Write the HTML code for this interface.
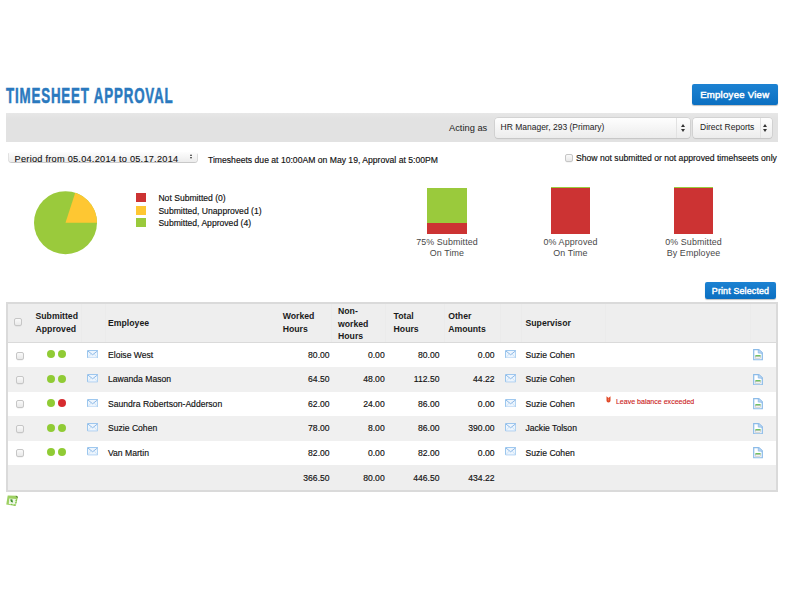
<!DOCTYPE html>
<html><head><meta charset="utf-8">
<style>
*{box-sizing:border-box;margin:0;padding:0}
html,body{width:788px;height:591px;overflow:hidden;background:#fff}
body{position:relative;font-family:"Liberation Sans",sans-serif;color:#222;font-size:8.6px}
.abs{position:absolute;white-space:nowrap}
.title{left:6.3px;top:83px;font-size:21.3px;line-height:26px;font-weight:bold;color:#2a79be;-webkit-text-stroke:0.55px #2a79be;letter-spacing:1.3px;transform:scaleX(0.627);transform-origin:0 0}
.btn{position:absolute;background:linear-gradient(#1c82d2,#0b6fc1);border-radius:2px;color:#fff;font-weight:bold;text-align:center;box-shadow:0 1px 1px rgba(0,0,0,.25)}
.bar{position:absolute;left:6px;top:112.5px;width:772px;height:29.5px;background:linear-gradient(#e7e7e7,#e2e2e2 20%,#e2e2e2)}
.sel{position:absolute;background:linear-gradient(#fefefe,#ececec);border-radius:3px;box-shadow:0 0 0 0.5px #c4c4c4,0 1px 1px rgba(0,0,0,.12)}
.arr{position:absolute;width:0;height:0;border-left:2.5px solid transparent;border-right:2.5px solid transparent}
.up{border-bottom:3px solid #333}
.dn{border-top:3px solid #333}
.sw{position:absolute;left:136px;width:10px;height:9px}
.lg{position:absolute;left:158.4px;font-size:8.6px;color:#111;-webkit-text-stroke:0.15px #111}
.cb{position:absolute;width:8px;height:8px;border:1px solid #c6c6c6;border-radius:2px;background:linear-gradient(#fafafa,#e9e9e9);box-shadow:0 0.5px 0.5px rgba(0,0,0,.08)}
.clab{position:absolute;text-align:center;color:#484848;font-size:8.9px;letter-spacing:0.12px;line-height:11px;width:120px}
.vbar{position:absolute;top:188px;width:40px;height:46px;background:#cc3333}
.th{position:absolute;font-weight:bold;font-size:8.7px;line-height:12.9px;color:#1a1a1a;white-space:nowrap}
.td{position:absolute;font-size:8.6px;line-height:13px;color:#111;-webkit-text-stroke:0.15px #111;white-space:nowrap}
.td.r{width:60px;text-align:right}
.dot{position:absolute;width:8px;height:8px;border-radius:50%;background:#90cb35}
.env,.doc{position:absolute}
</style></head><body>
<svg width="0" height="0" style="position:absolute">
<defs>
<symbol id="envsym" viewBox="0 0 23 18"><rect x="1" y="1" width="21" height="16" rx="1" fill="#edf5fd" stroke="#8dbdec" stroke-width="1.8"/><path d="M1.5 1.8 L11.5 10 L21.5 1.8" fill="none" stroke="#7fb0e4" stroke-width="1.8"/><path d="M2 16 L8.5 8 M21 16 L14.5 8" stroke="#b5d5f3" stroke-width="1.1"/></symbol>
<symbol id="docsym" viewBox="0 0 21 24"><path d="M1.5 1.5 H11.5 L19.5 9 V22.5 H1.5 Z" fill="#fff" stroke="#8bbbe8" stroke-width="2.6"/><path d="M11 1.5 Q11 8 11 8.5 Q14 8.5 19.5 9 L19.5 7 L13 1.5 Z" fill="#b5d3f2" stroke="#8bbbe8" stroke-width="1.6"/><rect x="5.5" y="15.3" width="10" height="4" fill="#f2f2f2" stroke="#a8a8a8" stroke-width="0.9"/><rect x="5" y="12.8" width="11" height="2.5" fill="#5cb84a"/></symbol>
</defs></svg>


<div class="abs title">TIMESHEET APPROVAL</div>
<div class="btn" style="left:691.5px;top:84px;width:86.5px;height:21px;font-size:9.6px;line-height:22px;font-weight:normal;-webkit-text-stroke:0.45px #fff;letter-spacing:0.25px"><span style="display:inline-block">Employee View</span></div>

<div class="bar"></div>
<div class="abs" style="left:449px;top:121.7px;font-size:9.3px;line-height:12px;color:#222">Acting as</div>
<div class="sel" style="left:494.5px;top:117.5px;width:195px;height:20px">
  <div class="abs" style="left:6px;top:3.3px;font-size:8.5px;line-height:12px;color:#222">HR Manager, 293 (Primary)</div>
  <div style="position:absolute;left:181.5px;top:0;width:1px;height:20px;background:#e2e2e2"></div>
  <div class="arr up" style="left:186px;top:6px"></div>
  <div class="arr dn" style="left:186px;top:11px"></div>
</div>
<div class="sel" style="left:693px;top:117.5px;width:79px;height:20px">
  <div class="abs" style="left:7px;top:3.3px;font-size:8.5px;line-height:12px;color:#222">Direct Reports</div>
  <div style="position:absolute;left:66.5px;top:0;width:1px;height:20px;background:#e2e2e2"></div>
  <div class="arr up" style="left:70px;top:6px"></div>
  <div class="arr dn" style="left:70px;top:11px"></div>
</div>

<div class="sel" style="left:8.5px;top:152px;width:188.5px;height:10.3px;border-radius:1px 2px 2.5px 2.5px;background:linear-gradient(#fdfdfd,#ececec);box-shadow:0.6px 0.8px 0 #c2c2c2,-0.6px 0.8px 0 #cfcfcf">
  <div class="arr up" style="left:181px;top:1.5px;border-left-width:1.5px;border-right-width:1.5px;border-bottom-width:2px"></div>
  <div class="arr dn" style="left:181px;top:5px;border-left-width:1.5px;border-right-width:1.5px;border-top-width:2px"></div>
</div>
<div class="abs" style="left:14.6px;top:153.2px;font-size:9.68px;line-height:12px;color:#111;letter-spacing:0.25px;font-size:9.2px;-webkit-text-stroke:0.1px #111">Period from 05.04.2014 to 05.17.2014</div>
<div class="abs" style="left:208px;top:153.7px;font-size:8.62px;line-height:12px;color:#111;-webkit-text-stroke:0.15px #111">Timesheets due at 10:00AM on May 19, Approval at 5:00PM</div>
<div class="cb" style="left:565px;top:153.5px"></div>
<div class="abs" style="left:576px;top:152px;font-size:8.63px;line-height:12px;color:#111;-webkit-text-stroke:0.15px #111">Show not submitted or not approved timehseets only</div>

<!-- pie -->
<svg class="abs" style="left:0;top:0" width="788" height="591">
  <circle cx="65.5" cy="222.7" r="31.5" fill="#9aca3c"/>
  <path d="M65.5 222.7 L97 222.7 A31.5 31.5 0 0 0 75.23 192.74 Z" fill="#fec732"/>
</svg>
<div class="sw" style="top:193px;background:#cc3333"></div>
<div class="sw" style="top:205.5px;background:#fec732"></div>
<div class="sw" style="top:218px;background:#9aca3c"></div>
<div class="lg" style="top:192px;line-height:12px">Not Submitted (0)</div>
<div class="lg" style="top:204.5px;line-height:12px">Submitted, Unapproved (1)</div>
<div class="lg" style="top:217px;line-height:12px">Submitted, Approved (4)</div>

<!-- bars -->
<div class="vbar" style="left:427px;background:linear-gradient(#9aca3c 0,#9aca3c 35px,#cc3333 35px)"></div>
<div class="vbar" style="left:551px;top:187px;width:39px;height:47px;border-top:1px solid #9aca3c"></div>
<div class="vbar" style="left:674px;top:187px;width:39px;height:47px;border-top:1px solid #9aca3c"></div>
<div class="clab" style="left:387px;top:237px">75% Submitted<br>On Time</div>
<div class="clab" style="left:510.5px;top:237px">0% Approved<br>On Time</div>
<div class="clab" style="left:633.5px;top:237px">0% Submitted<br>By Employee</div>

<div class="btn" style="left:705px;top:282px;width:71px;height:16.5px;font-size:8.9px;line-height:19px;font-weight:normal;-webkit-text-stroke:0.42px #fff;letter-spacing:0.15px"><span style="display:inline-block">Print Selected</span></div>

<!-- table -->
<div style="position:absolute;left:6px;top:302px;width:772px;height:189.5px;border:2px solid #dadada;background:#fff"></div>
<div style="position:absolute;left:8px;top:304px;width:768px;height:37.5px;background:#eeeeee"></div>
<div style="position:absolute;left:8px;top:341.5px;width:768px;height:1.5px;background:#dadada"></div>
<div style="position:absolute;left:81px;top:304px;width:1px;height:37.5px;background:#ebebeb"></div><div style="position:absolute;left:104.5px;top:304px;width:1px;height:37.5px;background:#ebebeb"></div><div style="position:absolute;left:330.5px;top:304px;width:1px;height:37.5px;background:#ebebeb"></div><div style="position:absolute;left:385px;top:304px;width:1px;height:37.5px;background:#ebebeb"></div><div style="position:absolute;left:443.5px;top:304px;width:1px;height:37.5px;background:#ebebeb"></div><div style="position:absolute;left:500px;top:304px;width:1px;height:37.5px;background:#ebebeb"></div><div style="position:absolute;left:520.5px;top:304px;width:1px;height:37.5px;background:#ebebeb"></div><div style="position:absolute;left:605px;top:304px;width:1px;height:37.5px;background:#ebebeb"></div><div style="position:absolute;left:749.5px;top:304px;width:1px;height:37.5px;background:#ebebeb"></div>
<div class="cb" style="left:13.5px;top:317.5px"></div>
<div class="th" style="left:35.5px;top:310.4px">Submitted<br>Approved</div>
<div class="th" style="left:108px;top:316.9px">Employee</div>
<div class="th" style="left:282.7px;top:310.4px">Worked<br>Hours</div>
<div class="th" style="left:338px;top:304.6px">Non-<br>worked<br>Hours</div>
<div class="th" style="left:393.6px;top:310.4px">Total<br>Hours</div>
<div class="th" style="left:448.2px;top:310.4px">Other<br>Amounts</div>
<div class="th" style="left:525.5px;top:316.9px">Supervisor</div>
<div class="cb" style="left:15.5px;top:351.50px"></div>
<div class="dot" style="left:47px;top:350.30px"></div>
<div class="dot" style="left:58px;top:350.30px;"></div>
<svg class="env" style="left:87px;top:349.60px" width="11.3" height="8.6" viewBox="0 0 23 18" preserveAspectRatio="none"><use href="#envsym"/></svg>
<div class="td" style="left:108px;top:349.00px">Eloise West</div>
<div class="td r" style="left:269.6px;top:349.00px">80.00</div>
<div class="td r" style="left:324.7px;top:349.00px">0.00</div>
<div class="td r" style="left:379.5px;top:349.00px">80.00</div>
<div class="td r" style="left:434.6px;top:349.00px">0.00</div>
<svg class="env" style="left:504.7px;top:349.60px" width="11.3" height="8.6" viewBox="0 0 23 18" preserveAspectRatio="none"><use href="#envsym"/></svg>
<div class="td" style="left:525.5px;top:349.00px">Suzie Cohen</div>
<svg class="doc" style="left:753.3px;top:349.40px" width="10" height="11.5" viewBox="0 0 21 24" preserveAspectRatio="none"><use href="#docsym"/></svg>
<div style="position:absolute;left:8px;top:367.47px;width:768px;height:24.47px;background:#f0f0f0"></div>
<div class="cb" style="left:15.5px;top:375.97px"></div>
<div class="dot" style="left:47px;top:374.77px"></div>
<div class="dot" style="left:58px;top:374.77px;"></div>
<svg class="env" style="left:87px;top:374.07px" width="11.3" height="8.6" viewBox="0 0 23 18" preserveAspectRatio="none"><use href="#envsym"/></svg>
<div class="td" style="left:108px;top:373.47px">Lawanda Mason</div>
<div class="td r" style="left:269.6px;top:373.47px">64.50</div>
<div class="td r" style="left:324.7px;top:373.47px">48.00</div>
<div class="td r" style="left:379.5px;top:373.47px">112.50</div>
<div class="td r" style="left:434.6px;top:373.47px">44.22</div>
<svg class="env" style="left:504.7px;top:374.07px" width="11.3" height="8.6" viewBox="0 0 23 18" preserveAspectRatio="none"><use href="#envsym"/></svg>
<div class="td" style="left:525.5px;top:373.47px">Suzie Cohen</div>
<svg class="doc" style="left:753.3px;top:373.87px" width="10" height="11.5" viewBox="0 0 21 24" preserveAspectRatio="none"><use href="#docsym"/></svg>
<div class="cb" style="left:15.5px;top:400.44px"></div>
<div class="dot" style="left:47px;top:399.24px"></div>
<div class="dot" style="left:58px;top:399.24px;background:#d62b2f"></div>
<svg class="env" style="left:87px;top:398.54px" width="11.3" height="8.6" viewBox="0 0 23 18" preserveAspectRatio="none"><use href="#envsym"/></svg>
<div class="td" style="left:108px;top:397.94px">Saundra Robertson-Adderson</div>
<div class="td r" style="left:269.6px;top:397.94px">62.00</div>
<div class="td r" style="left:324.7px;top:397.94px">24.00</div>
<div class="td r" style="left:379.5px;top:397.94px">86.00</div>
<div class="td r" style="left:434.6px;top:397.94px">0.00</div>
<svg class="env" style="left:504.7px;top:398.54px" width="11.3" height="8.6" viewBox="0 0 23 18" preserveAspectRatio="none"><use href="#envsym"/></svg>
<div class="td" style="left:525.5px;top:397.94px">Suzie Cohen</div>
<svg class="doc" style="left:753.3px;top:398.34px" width="10" height="11.5" viewBox="0 0 21 24" preserveAspectRatio="none"><use href="#docsym"/></svg>
<svg class="abs" style="left:606px;top:396.14px" width="5" height="7" viewBox="0 0 10 14"><path d="M1 0.5 L4 3 L5 4 L6 3 L9 0.5 L9 9.5 Q9 13 5 13 Q1 13 1 9.5 Z" fill="#e04a2a"/><path d="M4 5 L6 5 L6 9 L4 9 Z" fill="#f07a5a"/></svg>
<div class="abs" style="left:615.9px;top:396.54px;font-size:7.05px;line-height:10px;color:#cc2424;-webkit-text-stroke:0.12px #cc2424">Leave balance exceeded</div>
<div style="position:absolute;left:8px;top:416.41px;width:768px;height:24.47px;background:#f0f0f0"></div>
<div class="cb" style="left:15.5px;top:424.91px"></div>
<div class="dot" style="left:47px;top:423.71px"></div>
<div class="dot" style="left:58px;top:423.71px;"></div>
<svg class="env" style="left:87px;top:423.01px" width="11.3" height="8.6" viewBox="0 0 23 18" preserveAspectRatio="none"><use href="#envsym"/></svg>
<div class="td" style="left:108px;top:422.41px">Suzie Cohen</div>
<div class="td r" style="left:269.6px;top:422.41px">78.00</div>
<div class="td r" style="left:324.7px;top:422.41px">8.00</div>
<div class="td r" style="left:379.5px;top:422.41px">86.00</div>
<div class="td r" style="left:434.6px;top:422.41px">390.00</div>
<svg class="env" style="left:504.7px;top:423.01px" width="11.3" height="8.6" viewBox="0 0 23 18" preserveAspectRatio="none"><use href="#envsym"/></svg>
<div class="td" style="left:525.5px;top:422.41px">Jackie Tolson</div>
<svg class="doc" style="left:753.3px;top:422.81px" width="10" height="11.5" viewBox="0 0 21 24" preserveAspectRatio="none"><use href="#docsym"/></svg>
<div class="cb" style="left:15.5px;top:449.38px"></div>
<div class="dot" style="left:47px;top:448.18px"></div>
<div class="dot" style="left:58px;top:448.18px;"></div>
<svg class="env" style="left:87px;top:447.48px" width="11.3" height="8.6" viewBox="0 0 23 18" preserveAspectRatio="none"><use href="#envsym"/></svg>
<div class="td" style="left:108px;top:446.88px">Van Martin</div>
<div class="td r" style="left:269.6px;top:446.88px">82.00</div>
<div class="td r" style="left:324.7px;top:446.88px">0.00</div>
<div class="td r" style="left:379.5px;top:446.88px">82.00</div>
<div class="td r" style="left:434.6px;top:446.88px">0.00</div>
<svg class="env" style="left:504.7px;top:447.48px" width="11.3" height="8.6" viewBox="0 0 23 18" preserveAspectRatio="none"><use href="#envsym"/></svg>
<div class="td" style="left:525.5px;top:446.88px">Suzie Cohen</div>
<svg class="doc" style="left:753.3px;top:447.28px" width="10" height="11.5" viewBox="0 0 21 24" preserveAspectRatio="none"><use href="#docsym"/></svg>
<div style="position:absolute;left:8px;top:465.35px;width:768px;height:24.47px;background:#eeeeee"></div>
<div class="td r" style="left:269.6px;top:471.65px">366.50</div>
<div class="td r" style="left:324.7px;top:471.65px">80.00</div>
<div class="td r" style="left:379.5px;top:471.65px">446.50</div>
<div class="td r" style="left:434.6px;top:471.65px">434.22</div>
<svg class="abs" style="left:5.9px;top:495.3px" width="12" height="11.3" viewBox="0 0 24 22.6"><path d="M3.4 1 L21.5 1.3 Q24 2 23.5 5 L19.5 22 L0.5 19.2 Z" fill="#9dd062"/><path d="M19.5 1.5 Q23.8 1.5 23.6 4.8 L23 6.8 Q22.5 4.2 19.8 4 Z" fill="#5b8b3c"/><path d="M6.5 7 L19.8 7.8 L18.6 19.5 L5.6 18.2 Z" fill="#eef7e6"/><path d="M8.3 8.8 L12.5 8.5 L14.2 15 L10.2 14.2 Z" fill="#3f922d"/><circle cx="20.3" cy="10.8" r="1.4" fill="#78c044"/><circle cx="19.8" cy="15.2" r="1.4" fill="#78c044"/><circle cx="11.5" cy="18.8" r="1.4" fill="#78c044"/><circle cx="16.5" cy="20" r="1.4" fill="#78c044"/></svg>
</body></html>
